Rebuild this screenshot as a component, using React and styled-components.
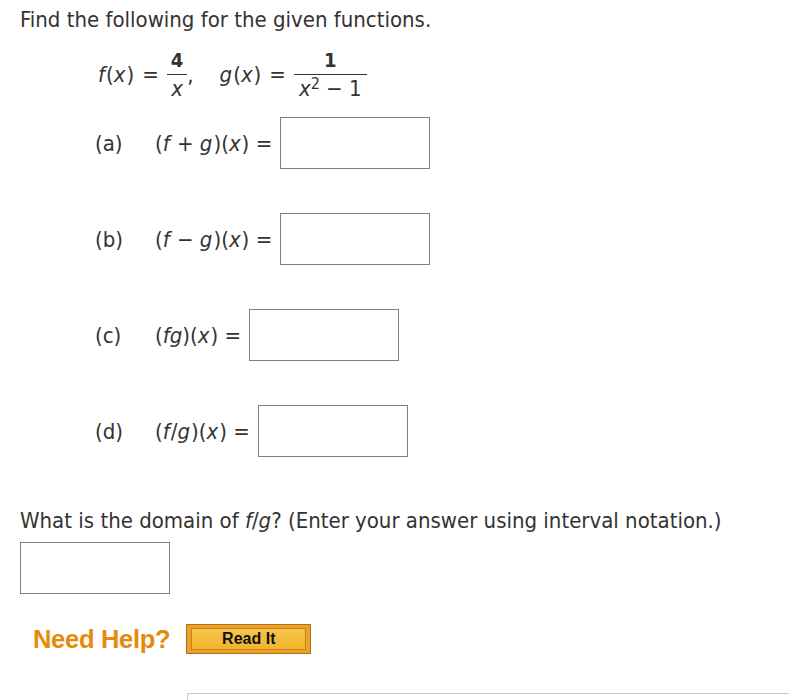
import styled, { createGlobalStyle } from "styled-components";

const GlobalStyle = createGlobalStyle`
    body {
        margin: 0;
        background: #fff;
        font-family: "DejaVu Sans Condensed", "DejaVu Sans", sans-serif;
        color: #333;
    }
`

const Page = styled.div`
    padding: 8px 0 0 20px;
    overflow: hidden;
    height: 700px;
    box-sizing: border-box;
`

const Text = styled.p`
    margin: 0;
    font-size: 22px;
    line-height: 24px;
`

const FunctionsLine = styled.div`
    display: flex;
    align-items: center;
    margin: 14px 0 0 78px;
    font-size: 22px;
    height: 56px;
`

const Var = styled.i`
    font-style: oblique;
    padding-right: ${p => (p.tight ? 0 : 1)}px;
`

const Op = styled.span`
    margin: 0 8px;
`

const Comma = styled.span`
    align-self: flex-end;
    margin: 0 26px 14px 0;
`

const Fraction = styled.span`
    display: inline-flex;
    flex-direction: column;
    align-items: center;
    line-height: 24px;
`

const Numer = styled.span`
    font-size: 20px;
    font-weight: bold;
    padding: 0 4px 2px;
`

const Denom = styled.span`
    border-top: 1px solid #333;
    padding: 2px ${p => p.pad || 4}px 0;
    align-self: stretch;
    text-align: center;
`

const Sup = styled.sup`
    font-size: 16px;
    vertical-align: 7px;
    line-height: 0;
`

const PartRow = styled.div`
    display: flex;
    align-items: center;
    margin: ${p => p.top}px 0 0 75px;
    font-size: 22px;
`

const PartLabel = styled.span`
    width: 60px;
`

const Expr = styled.span`
    margin-right: 8px;
`

const AnswerBox = styled.div`
    width: 148px;
    height: 50px;
    border: 1px solid #808080;
    background: #fff;
`

const HelpRow = styled.div`
    display: flex;
    align-items: center;
    margin: 30px 0 0 13px;
    gap: 16px;
`

const HelpText = styled.span`
    font-family: "Liberation Sans", Arial, sans-serif;
    font-weight: bold;
    font-size: 25.5px;
    color: #e8890c;
    letter-spacing: -0.3px;
`

const ReadButton = styled.div`
    width: 125px;
    height: 30px;
    box-sizing: border-box;
    border: 1px solid #a9731c;
    background: #eea126;
    padding: 3px 4px;
`

const ReadInner = styled.div`
    height: 100%;
    box-sizing: border-box;
    border: 1px solid #c3841a;
    background: linear-gradient(#f6c448, #f1b52c);
    display: flex;
    align-items: center;
    justify-content: center;
    font-family: "Liberation Sans Narrow", "Liberation Sans", Arial, sans-serif;
    font-weight: bold;
    font-size: 16px;
    color: #111;
`

const NextPanel = styled.div`
    margin: 39px 0 0 167px;
    height: 40px;
    border-top: 1px solid #c8c8c8;
    border-left: 1px solid #c8c8c8;
`

const parts = [
    { label: "(a)", top: 15, expr: <>(<Var>f</Var> + <Var>g</Var>)(<Var>x</Var>)</> },
    { label: "(b)", top: 44, expr: <>(<Var>f</Var> − <Var>g</Var>)(<Var>x</Var>)</> },
    { label: "(c)", top: 44, expr: <>(<Var tight>fg</Var>)(<Var>x</Var>)</> },
    { label: "(d)", top: 44, expr: <>(<Var>f</Var>/<Var>g</Var>)(<Var>x</Var>)</> },
];

export default function App() {
    return (
        <Page>
            <GlobalStyle />
            <Text>Find the following for the given functions.</Text>
            <FunctionsLine>
                <Var>f</Var>(<Var>x</Var>)
                <Op>=</Op>
                <Fraction>
                    <Numer>4</Numer>
                    <Denom><Var tight>x</Var></Denom>
                </Fraction>
                <Comma>,</Comma>
                <Var>g</Var>(<Var>x</Var>)
                <Op>=</Op>
                <Fraction>
                    <Numer>1</Numer>
                    <Denom pad={5}><Var tight>x</Var><Sup>2</Sup> − 1</Denom>
                </Fraction>
            </FunctionsLine>
            {parts.map(p => (
                <PartRow key={p.label} top={p.top}>
                    <PartLabel>{p.label}</PartLabel>
                    <Expr>{p.expr} =</Expr>
                    <AnswerBox />
                </PartRow>
            ))}
            <Text style={{ marginTop: 52 }}>
                What is the domain of <Var tight>f</Var>/<Var tight>g</Var>? (Enter your answer using interval notation.)
            </Text>
            <AnswerBox style={{ marginTop: 9 }} />
            <HelpRow>
                <HelpText>Need Help?</HelpText>
                <ReadButton>
                    <ReadInner>Read It</ReadInner>
                </ReadButton>
            </HelpRow>
            <NextPanel />
        </Page>
    );
}
